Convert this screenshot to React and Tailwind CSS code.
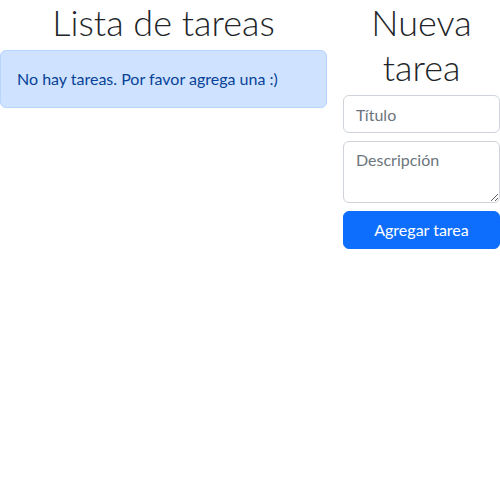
export default function App() {
  return (
    <div className="flex items-start text-[16px] text-[#212529]" style={{ fontFamily: 'Lato, "Noto Sans", sans-serif' }}>
      <div className="w-[327px] shrink-0">
        <h1 className="text-center text-[36px] font-light leading-[44.5px] mb-[5.5px]">Lista de tareas</h1>
        <div className="rounded-[6px] border border-[#b6d4fe] bg-[#cfe2ff] px-4 py-4 leading-6 text-[#084298]">
          No hay tareas. Por favor agrega una :)
        </div>
      </div>
      <div className="ml-4 flex-1 min-w-0">
        <h1 className="text-center text-[36px] font-light leading-[44.5px] mb-[6px]">Nueva tarea</h1>
        <form className="flex flex-col" onSubmit={(e) => e.preventDefault()}>
          <input
            type="text"
            placeholder="Título"
            className="mb-2 block h-[38px] w-full rounded-[6px] border border-[#ced4da] bg-white px-3 py-[6px] leading-6 text-[#212529] placeholder:text-[#6c757d] outline-none"
          />
          <textarea
            rows={2}
            placeholder="Descripción"
            className="mb-2 block h-[62px] w-full rounded-[6px] border border-[#ced4da] bg-white px-3 py-[6px] leading-6 text-[#212529] placeholder:text-[#6c757d] outline-none"
          />
          <button
            type="submit"
            className="block h-[38px] w-full rounded-[6px] border border-[#0d6efd] bg-[#0d6efd] px-3 py-[6px] leading-6 text-white"
          >
            Agregar tarea
          </button>
        </form>
      </div>
    </div>
  );
}
